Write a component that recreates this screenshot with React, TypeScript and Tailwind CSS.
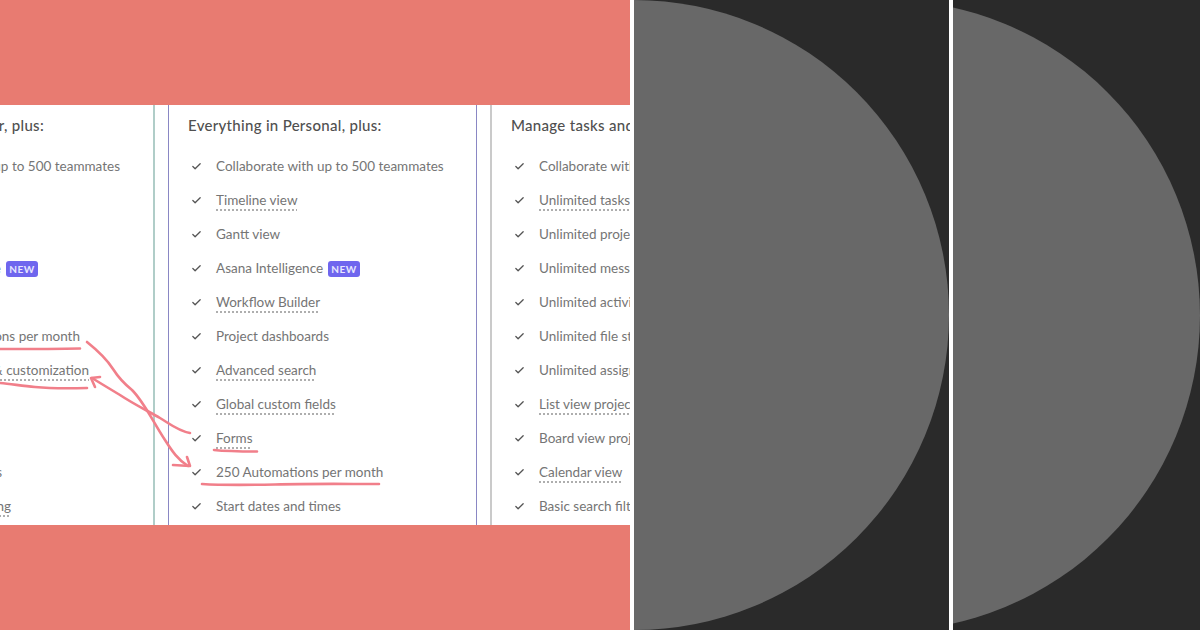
import { Check } from "lucide-react";

interface Row {
  label: string;
  dotted?: boolean;
  badge?: boolean;
  // right margin, only used by the clipped first column
  end?: string;
}

const STARTER_ROWS: Row[] = [
  { label: "Collaborate with up to 500 teammates", end: "mr-[33px]" },
  { label: "Goals", end: "mr-[170px]" },
  { label: "Portfolios", end: "mr-[170px]" },
  { label: "Asana Intelligence", badge: true, end: "mr-[115px]" },
  { label: "Workload", end: "mr-[170px]" },
  { label: "25,000 Automations per month", end: "mr-[73px]" },
  { label: "Reporting & customization", dotted: true, end: "mr-[64px]" },
  { label: "Proofing", end: "mr-[170px]" },
  { label: "Approvals", end: "mr-[170px]" },
  { label: "Custom role permissions", end: "mr-[151px]" },
  { label: "Time tracking", dotted: true, end: "mr-[142px]" },
];

const PERSONAL_ROWS: Row[] = [
  { label: "Collaborate with up to 500 teammates" },
  { label: "Timeline view", dotted: true },
  { label: "Gantt view" },
  { label: "Asana Intelligence", badge: true },
  { label: "Workflow Builder", dotted: true },
  { label: "Project dashboards" },
  { label: "Advanced search", dotted: true },
  { label: "Global custom fields", dotted: true },
  { label: "Forms", dotted: true },
  { label: "250 Automations per month" },
  { label: "Start dates and times" },
];

const BASIC_ROWS: Row[] = [
  { label: "Collaborate with up to 10 teammates" },
  { label: "Unlimited tasks", dotted: true },
  { label: "Unlimited projects" },
  { label: "Unlimited messages" },
  { label: "Unlimited activity log" },
  { label: "Unlimited file storage" },
  { label: "Unlimited assignees" },
  { label: "List view projects", dotted: true },
  { label: "Board view projects" },
  { label: "Calendar view", dotted: true },
  { label: "Basic search filters" },
];

function Label({ row }: { row: Row }) {
  return (
    <>
      <span
        className={
          row.dotted
            ? "whitespace-nowrap leading-[18px] underline decoration-[#aeaeae] decoration-dotted decoration-[1.5px] underline-offset-[4px]"
            : "whitespace-nowrap leading-[18px]"
        }
      >
        {row.label}
      </span>
      {row.badge && (
        <span className="ml-[5px] mt-[2px] flex h-[16px] w-[32px] shrink-0 items-center justify-center rounded-[3px] bg-[#6f66ee] text-[10px] font-bold tracking-[0.5px] text-[#e8e6ff]">
          NEW
        </span>
      )}
    </>
  );
}

function FeatureColumn({ title, rows }: { title: string; rows: Row[] }) {
  return (
    <div className="pl-[19px] pt-[10px]">
      <h3 className="h-[20px] whitespace-nowrap text-[15px] font-medium leading-[20px] tracking-[0.3px] text-[#505050]">
        {title}
      </h3>
      <ul className="mt-[14px]">
        {rows.map((row) => (
          <li key={row.label} className="flex h-[34px] items-center text-[13.5px] text-[#757575]">
            <Check className="ml-[3px] mr-[14px] h-[11px] w-[11px] shrink-0 text-[#555555]" strokeWidth={2.8} />
            <Label row={row} />
          </li>
        ))}
      </ul>
    </div>
  );
}

function ClippedColumn({ title, rows }: { title: string; rows: Row[] }) {
  return (
    <div className="flex h-full w-[155px] shrink-0 flex-col overflow-hidden border-r-2 border-[#b0cdc8] pt-[10px]">
      <div className="flex h-[20px] justify-end">
        <h3 className="mr-[109px] shrink-0 whitespace-nowrap text-[15px] font-medium leading-[20px] tracking-[0.3px] text-[#505050]">
          {title}
        </h3>
      </div>
      <ul className="mt-[14px]">
        {rows.map((row) => (
          <li key={row.label} className="flex h-[34px] items-center justify-end text-[13.5px] text-[#757575]">
            <div className={`flex shrink-0 items-center ${row.end}`}>
              <Label row={row} />
            </div>
          </li>
        ))}
      </ul>
    </div>
  );
}

function Scribbles() {
  return (
    <svg className="pointer-events-none absolute left-0 top-0" width="630" height="630" fill="none" stroke="#f17f8a" strokeWidth="2.6" strokeLinecap="round" strokeLinejoin="round">
      <path d="M0 349 C 25 349 55 349 80 348.5" />
      <path d="M0 383 C 12 384 22 386 35 387 C 50 388.5 70 388.5 87 388" />
      <path d="M87 342 C 97 350 106 358 113 369 C 120 380 127 386 132 390 C 144 402 152 420 165 440 C 172 451 178 460 188 466" />
      <path d="M173 465 L190 466 L187 457" />
      <path d="M190 433 C 178 431 170 424 160 418 C 150 412 135 405 120 395 C 110 389 100 383 92 378" />
      <path d="M100 377 L91 378 L95 387" />
      <path d="M214 450 C 228 451.5 244 451.5 257 451.5" />
      <path d="M202 484 C 225 485.5 250 485 275 484.5 C 310 483.5 345 484 379 484" />
    </svg>
  );
}

export default function App() {
  return (
    <div className="flex h-[630px] w-[1200px] overflow-hidden bg-white font-['Lato','Liberation_Sans',sans-serif]">
      <section className="relative flex h-full w-[630px] shrink-0 flex-col overflow-hidden">
        <div className="h-[105px] shrink-0 bg-[#e87b71]" />
        <div className="flex h-[420px] shrink-0 bg-white">
          <ClippedColumn title="Everything in Starter, plus:" rows={STARTER_ROWS} />
          <div className="ml-[13px] h-full w-[309px] shrink-0 border-x border-[#8a87c4]">
            <FeatureColumn title="Everything in Personal, plus:" rows={PERSONAL_ROWS} />
          </div>
          <div className="ml-[13px] h-full w-[200px] shrink-0 overflow-hidden border-l-2 border-[#cacaca]">
            <FeatureColumn title="Manage tasks and personal to-dos" rows={BASIC_ROWS} />
          </div>
        </div>
        <div className="h-[105px] shrink-0 bg-[#e87b71]" />
        <Scribbles />
      </section>

      <div className="relative ml-[4px] h-full w-[315px] shrink-0 overflow-hidden bg-[#2a2a2a]">
        <div className="absolute left-[-315px] top-0 h-[630px] w-[630px] rounded-full bg-[#686868]" />
      </div>

      <div className="relative ml-[4px] h-full w-[247px] shrink-0 overflow-hidden bg-[#2a2a2a]">
        <div className="absolute left-[-384px] top-0 h-[631px] w-[631px] rounded-full bg-[#686868]" />
      </div>
    </div>
  );
}
